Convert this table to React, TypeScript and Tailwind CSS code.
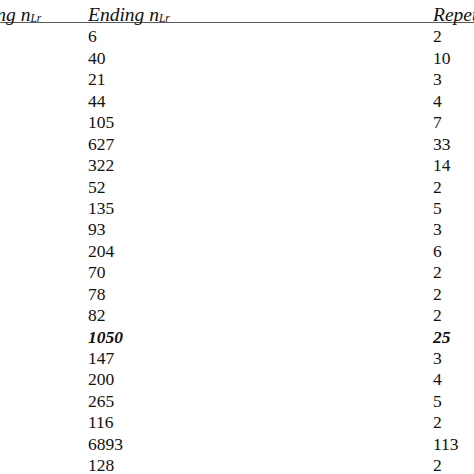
const rows: { end: string; rep: string; bold?: boolean }[] = [
  { end: '6', rep: '2' },
  { end: '40', rep: '10' },
  { end: '21', rep: '3' },
  { end: '44', rep: '4' },
  { end: '105', rep: '7' },
  { end: '627', rep: '33' },
  { end: '322', rep: '14' },
  { end: '52', rep: '2' },
  { end: '135', rep: '5' },
  { end: '93', rep: '3' },
  { end: '204', rep: '6' },
  { end: '70', rep: '2' },
  { end: '78', rep: '2' },
  { end: '82', rep: '2' },
  { end: '1050', rep: '25', bold: true },
  { end: '147', rep: '3' },
  { end: '200', rep: '4' },
  { end: '265', rep: '5' },
  { end: '116', rep: '2' },
  { end: '6893', rep: '113' },
  { end: '128', rep: '2' },
]

function NLr() {
  return (
    <>
      {' '}n<sub className="text-[11.5px] italic relative top-[1px]">Lr</sub>
    </>
  )
}

export default function App() {
  return (
    <div className="w-[474px] h-[474px] overflow-hidden bg-white text-[#111] text-[17.5px] font-[family-name:'Liberation_Serif','Times_New_Roman',serif]">
      <div className="grid grid-cols-[88px_345px_1fr] h-[23px] items-center border-b-[1.5px] border-[#5a5a5a] italic whitespace-nowrap text-[19.5px]">
        <div className="overflow-hidden">
          <span className="block ml-[-47px]">Starting<NLr /></span>
        </div>
        <div>Ending<NLr /></div>
        <div className="overflow-hidden">Repetitions</div>
      </div>
      <div className="pt-[3.5px]">
        {rows.map((r, i) => (
          <div
            key={i}
            className={`grid grid-cols-[88px_345px_1fr] h-[21.45px] items-center leading-none ${r.bold ? 'font-bold italic' : ''}`}
          >
            <div />
            <div>{r.end}</div>
            <div>{r.rep}</div>
          </div>
        ))}
      </div>
    </div>
  )
}
